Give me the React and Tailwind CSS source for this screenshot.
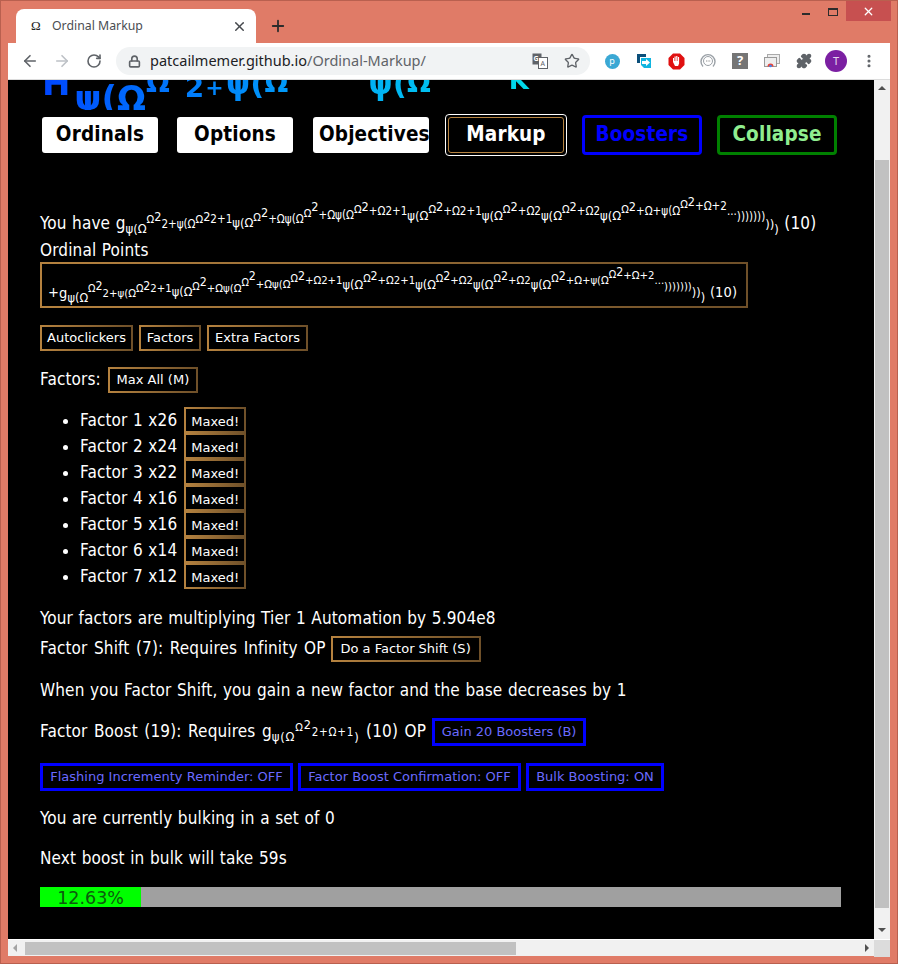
import React from "react";
import { ArrowLeft, ArrowRight, RotateCw, Star, X, Plus, EllipsisVertical, Lock, Puzzle } from "lucide-react";

const fontMain = "font-['DejaVu_Sans_Condensed','DejaVu_Sans',sans-serif] [font-stretch:condensed]";
const fontWide = "font-['DejaVu_Sans',sans-serif] [font-stretch:normal]";
const brown = "border-2 [border-image:linear-gradient(90deg,#b5823f,#6f5029)_1]";

// sizes and baselines of the ordinal text, in em so both lines can scale from the parent
const P0 = "text-[0.76em] align-[-0.31em]";
const P1 = "text-[0.76em] align-[0.15em]";
const P2 = "text-[0.76em] align-[0.69em]";
const O0 = "text-[0.65em] align-[0.55em]";
const O1 = "text-[0.65em] align-[0.75em]";
const O2 = "text-[0.65em] align-[1.1em]";
const O3 = "text-[0.65em] align-[1.45em]";
const O4 = "text-[0.65em] align-[1.9em]";
const W0 = "text-[0.74em] align-[0.65em]";
const W1 = "text-[0.74em] align-[0.95em]";
const W2 = "text-[0.74em] align-[1.43em]";
const W3 = "text-[0.74em] align-[1.83em]";
const M0 = "text-[0.68em] align-[0.09em]";
const M1 = "text-[0.68em] align-[0.52em]";
const M2 = "text-[0.68em] align-[0.87em]";
const M3 = "text-[0.68em] align-[1.22em]";
const M4 = "text-[0.68em] align-[1.65em]";
const C0 = "text-[0.68em] align-[0.7em]";
const C1 = "text-[0.76em] align-[0.05em]";
const C2 = "text-[0.76em] align-[-0.3em]";

const ordinal = [
  ["ψ(Ω", P0], ["Ω", O0], ["2", W0], ["2+ψ(Ω", M0],
  ["Ω", O0], ["2", W0], ["2+1", M1],
  ["ψ(Ω", P1], ["Ω", O1], ["2", W1], ["+Ωψ(Ω", M1],
  ["Ω", O2], ["2", W2], ["+Ωψ(Ω", M2],
  ["Ω", O3], ["2", W2], ["+Ω2+1", M3],
  ["ψ(Ω", P2], ["Ω", O3], ["2", W2], ["+Ω2+1", M3],
  ["ψ(Ω", P2], ["Ω", O3], ["2", W2], ["+Ω2", M3],
  ["ψ(Ω", P2], ["Ω", O3], ["2", W2], ["+Ω2", M3],
  ["ψ(Ω", P2], ["Ω", O3], ["2", W2], ["+Ω+ψ(Ω", M3],
  ["Ω", O4], ["2", W3], ["+Ω+2", M4],
  ["...", M3], ["))))))", C0], [")", C0], ["))", C1], [")", C2],
];

function Ord({ size }) {
  return (
    <span className="whitespace-nowrap">
      g
      <span className={"leading-[0] tracking-normal [word-spacing:0] " + size}>
        {ordinal.map(([t, c], i) => (
          <span key={i} className={"leading-[0] " + c}>{t}</span>
        ))}
      </span>
    </span>
  );
}

function TabBtn({ children, className }) {
  return (
    <button className={"h-[36px] w-[116px] rounded-[3px] bg-white pb-[2px] text-[20.5px] font-bold text-black whitespace-nowrap " + className}>
      {children}
    </button>
  );
}

function Small({ children, className = "" }) {
  return (
    <button className={"h-[26px] bg-black text-[13px] tracking-normal [word-spacing:0] text-white whitespace-nowrap " + fontWide + " " + brown + " " + className}>
      {children}
    </button>
  );
}

function Blue({ children, className = "" }) {
  return (
    <button className={"h-[28px] bg-black border-[3px] border-[#0000ff] text-[13px] tracking-normal [word-spacing:0] text-[#6a6aff] whitespace-nowrap " + fontWide + " " + className}>
      {children}
    </button>
  );
}

function Ext({ children }) {
  return <div className="flex h-[32px] w-[32px] items-center justify-center">{children}</div>;
}

function Browser() {
  return (
    <div className="font-['Noto_Sans',sans-serif]">
      <div className="flex h-[42px] items-end pl-[15px]">
        <div className="flex h-[34px] w-[240px] items-center rounded-t-[8px] bg-white pl-[15px] pr-[9px]">
          <span className="w-[21px] text-[13px] text-[#222] font-['Liberation_Serif',serif]">Ω</span>
          <span className="flex-1 text-[12.3px] text-[#4a4d52]">Ordinal Markup</span>
          <X size={15} strokeWidth={2.4} className="text-[#45484d]" />
        </div>
        <Plus size={18} strokeWidth={2.4} className="ml-[13px] mb-[8px] text-[#2c2c2c]" />
        <div className="ml-auto mr-[6px] flex h-[20px] items-center self-start">
          <div className="mr-[18px] mt-[5px] h-[2px] w-[8px] bg-[#2c2c2c]" />
          <div className="mr-[8px] mt-[2px] h-[8px] w-[10px] border border-t-2 border-[#2c2c2c]" />
          <div className="flex h-[20px] w-[45px] items-center justify-center bg-[#c75050]">
            <X size={13} strokeWidth={2.4} className="text-white" />
          </div>
        </div>
      </div>
      <div className="mx-[7px] flex h-[37px] items-center border-b border-[#dcdcdc] bg-white">
        <ArrowLeft size={18} strokeWidth={2.2} className="ml-[13px] text-[#5f6368]" />
        <ArrowRight size={18} strokeWidth={2.2} className="ml-[14px] text-[#bdc1c6]" />
        <RotateCw size={16} strokeWidth={2.4} className="ml-[15px] text-[#5f6368]" />
        <div className="ml-[14px] flex h-[28px] w-[474px] items-center rounded-full bg-[#f1f3f4] pl-[12px]">
          <Lock size={13} strokeWidth={3} className="text-[#5f6368]" />
          <span className="ml-[9px] text-[14.5px] text-[#202124]">patcailmemer.github.io</span>
          <span className="text-[14.5px] text-[#5f6368]">/Ordinal-Markup/</span>
          <svg width="16" height="16" viewBox="0 0 16 16" className="ml-auto">
            <rect x="0.500" y="0.500" width="9" height="11" fill="#5f6368" />
            <rect x="6.500" y="4.500" width="9" height="11" fill="#fff" stroke="#5f6368" />
            <text x="1.500" y="8" fontSize="7" fontWeight="700" fill="#fff">G</text>
            <text x="8.500" y="12.500" fontSize="7" fill="#5f6368">A</text>
          </svg>
          <Star size={16} strokeWidth={2} className="ml-[16px] mr-[10px] text-[#5f6368]" />
        </div>
        <div className="ml-[6px] flex items-center">
          <Ext>
            <div className="flex h-[15px] w-[15px] items-center justify-center rounded-full bg-[#3ba8d4] text-[9px] text-white">p</div>
          </Ext>
          <Ext>
            <svg width="16" height="16" viewBox="0 0 16 16">
              <path d="M1 1h9v3H4v6H1z" fill="#0b4f7a" />
              <path d="M5 5h10v10H8l-3-3z" fill="#10b5e0" />
              <path d="M6 8h4V6l4 3.500L10 13v-2H6z" fill="#fff" />
            </svg>
          </Ext>
          <Ext>
            <svg width="17" height="17" viewBox="0 0 17 17">
              <path d="M5 0.500h7L16.500 5v7L12 16.500H5L0.500 12V5z" fill="#e01010" />
              <path d="M5 9V5h1v3h.5V3.500h1.200V8h.5V3h1.200v5h.5V4h1.200v6.500l-1 2.500H7z" fill="#fff" />
            </svg>
          </Ext>
          <Ext>
            <svg width="16" height="16" viewBox="0 0 16 16" fill="none">
              <path d="M3 13.500A7 7 0 1 1 13 13.500" stroke="#9aa0a6" strokeWidth="1.400" />
              <circle cx="8" cy="8" r="4.500" stroke="#9aa0a6" />
              <path d="M6 8h.8M7.700 8h.8M9.400 8h.8" stroke="#777" />
            </svg>
          </Ext>
          <Ext>
            <div className="flex h-[16px] w-[16px] items-center justify-center bg-[#757575] text-[13px] font-bold text-white">?</div>
          </Ext>
          <Ext>
            <svg width="16" height="16" viewBox="0 0 16 16" fill="none">
              <rect x="3.500" y="1.500" width="12" height="9" fill="#eee" stroke="#aaa" />
              <rect x="0.500" y="4.500" width="12" height="9" fill="#eee" stroke="#999" />
              <path d="M3.500 13.500a3 3 0 0 1 6 0z" fill="#ea4335" />
              <circle cx="6.500" cy="13" r="1.300" fill="#4285f4" />
            </svg>
          </Ext>
          <Ext>
            <Puzzle size={16} fill="#5f6368" className="text-[#5f6368]" />
          </Ext>
          <div className="flex h-[32px] w-[32px] items-center justify-center">
            <div className="flex h-[22px] w-[22px] items-center justify-center rounded-full bg-[#7b1fa2] text-[11px] text-[#e6d5ee]">T</div>
          </div>
          <EllipsisVertical size={16} strokeWidth={2.6} className="ml-[9px] text-[#5f6368]" />
        </div>
      </div>
    </div>
  );
}

function Game() {
  const factors = [26, 24, 22, 16, 16, 14, 12];
  return (
    <div className={"flex-1 overflow-hidden bg-black pl-[32px] text-[17px] tracking-[0.14px] [word-spacing:0.5px] text-white " + fontMain}>
      {/* the title is scrolled mostly out of view, only its bottom shows */}
      <div className={"h-[30px] w-[510px] whitespace-nowrap bg-gradient-to-r from-[#0044ff] to-[#00e0e8] bg-clip-text text-transparent font-bold leading-[30px] tracking-normal [word-spacing:0] " + fontWide}>
        <span className="ml-[2px] align-[29px] text-[34px] leading-[0]">H</span>
        <span className="ml-[4px] align-[14px] text-[34px] leading-[0]">ψ(Ω</span>
        <span className="align-[32px] text-[28px] leading-[0]">Ω</span>
        <span className="ml-[15px] align-[27px] text-[28px] leading-[0]">2</span>
        <span className="ml-[1px] align-[29px] text-[22px] leading-[0]">+</span>
        <span className="ml-[2px] align-[30px] text-[31px] leading-[0]">ψ(</span>
        <span className="align-[32px] text-[28px] leading-[0]">Ω</span>
        <span className="ml-[80px] align-[30px] text-[31px] leading-[0]">ψ(</span>
        <span className="align-[32px] text-[28px] leading-[0]">Ω</span>
        <span className="ml-[78px] align-[35px] text-[26px] leading-[0]">K</span>
      </div>

      <div className="mt-[4px] flex items-center">
        <TabBtn className="ml-[2px]">Ordinals</TabBtn>
        <TabBtn className="ml-[19px]">Options</TabBtn>
        <TabBtn className="ml-[20px] pl-[6px]">Objectives</TabBtn>
        <div className="ml-[16px] rounded-[4px] border border-white p-[2px]">
          <button className="h-[36px] w-[116px] rounded-[3px] border border-[#b5823f] bg-black pb-[2px] text-[20.5px] font-bold text-white">Markup</button>
        </div>
        <button className="ml-[15px] h-[40px] w-[120px] rounded-[4px] border-[3px] border-[#0000ff] bg-black pb-[2px] text-[20.5px] font-bold text-[#0000ff]">Boosters</button>
        <button className="ml-[15px] h-[40px] w-[120px] rounded-[4px] border-[3px] border-[#008000] bg-black pb-[2px] text-[20.5px] font-bold text-[#90ee90]">Collapse</button>
      </div>

      <div className="mt-[46px] leading-[27px]">
        <p>You have <Ord size="text-[17px]" /> (10)</p>
        <p>Ordinal Points</p>
      </div>

      <div className={"-mt-[2px] flex h-[46px] w-[708px] items-center pl-[6px] pt-[6px] text-[14.5px] whitespace-nowrap " + brown}>
        <span>+<Ord size="text-[16.6px]" /> (10)</span>
      </div>

      <div className="mt-[17px] flex gap-[6px]">
        <Small className="w-[93px]">Autoclickers</Small>
        <Small className="w-[62px]">Factors</Small>
        <Small className="w-[101px]">Extra Factors</Small>
      </div>

      <div className="mt-[16px] flex items-center gap-[7px]">
        <span>Factors:</span>
        <Small className="w-[90px]">Max All (M)</Small>
      </div>

      <ul className="mt-[14px] list-disc pl-[40px]">
        {factors.map((x, i) => (
          <li key={i} className="h-[26px] leading-[26px]">
            <span className="flex items-center gap-[7px]">
              Factor {i + 1} x{x}
              <Small className="w-[62px]">Maxed!</Small>
            </span>
          </li>
        ))}
      </ul>

      <p className="mt-[16px] leading-[26px]">Your factors are multiplying Tier 1 Automation by 5.904e8</p>
      <div className="mt-[5px] flex items-center gap-[5px]">
        <span className="[word-spacing:1.5px]">Factor Shift (7): Requires Infinity OP</span>
        <Small className="w-[150px]">Do a Factor Shift (S)</Small>
      </div>
      <p className="mt-[15px] leading-[26px]">When you Factor Shift, you gain a new factor and the base decreases by 1</p>

      <div className="mt-[15px] flex h-[28px] items-center gap-[6px]">
        <span className="[word-spacing:1.5px]">
          Factor Boost (19): Requires g
          <span className="tracking-[0.8px]">
            <span className="leading-[0] text-[0.76em] align-[-0.31em]">ψ(Ω</span>
            <span className="leading-[0] text-[0.65em] align-[0.55em]">Ω</span>
            <span className="leading-[0] text-[0.74em] align-[0.65em]">2</span>
            <span className="leading-[0] text-[0.68em] align-[0.09em]">2+Ω+1</span>
            <span className="leading-[0] text-[0.76em] align-[-0.31em]">)</span>
          </span>{" "}
          (10) OP
        </span>
        <Blue className="w-[154px]">Gain 20 Boosters (B)</Blue>
      </div>

      <div className="mt-[17px] flex gap-[5px]">
        <Blue className="w-[253px]">Flashing Incrementy Reminder: OFF</Blue>
        <Blue className="w-[223px]">Factor Boost Confirmation: OFF</Blue>
        <Blue className="w-[138px]">Bulk Boosting: ON</Blue>
      </div>

      <p className="mt-[14px] leading-[26px]">You are currently bulking in a set of 0</p>
      <p className="mt-[14px] leading-[26px]">Next boost in bulk will take 59s</p>

      <div className="mt-[16px] h-[20px] w-[801px] bg-[#a0a0a0]">
        <div className={"h-full bg-[#00ff00] text-center text-[17.5px] leading-[22px] tracking-normal text-[#0d5a0d] " + fontWide} style={{ width: "12.63%" }}>
          12.63%
        </div>
      </div>
    </div>
  );
}

export default function App() {
  return (
    <div className="flex h-[964px] w-[898px] flex-col overflow-hidden border border-[#b9604f] bg-[#e07b67]">
      <Browser />
      <div className="mx-[7px] flex min-h-0 flex-1 flex-col">
        <div className="flex min-h-0 flex-1">
          <Game />
          <div className="flex w-[16px] flex-col items-center bg-[#f1f1f1]">
            <div className="mt-[6px] h-0 w-0 border-x-[4px] border-b-[4px] border-x-transparent border-b-[#505050]" />
            <div className="mt-[70px] h-[748px] w-[14px] bg-[#c1c1c1]" />
            <div className="mt-[20px] h-0 w-0 border-x-[4px] border-t-[4px] border-x-transparent border-t-[#505050]" />
          </div>
        </div>
        <div className="flex h-[17px] items-center border-t border-white bg-[#f1f1f1]">
          <div className="ml-[5px] h-0 w-0 border-y-[4px] border-r-[4px] border-y-transparent border-r-[#a3a3a3]" />
          <div className="ml-[8px] h-[13px] w-[491px] bg-[#c1c1c1]" />
          <div className="ml-auto mr-[5px] h-0 w-0 border-y-[4px] border-l-[4px] border-y-transparent border-l-[#505050]" />
          <div className="h-[17px] w-[16px] bg-[#dcdcdc]" />
        </div>
      </div>
      <div className="h-[7px]" />
    </div>
  );
}
